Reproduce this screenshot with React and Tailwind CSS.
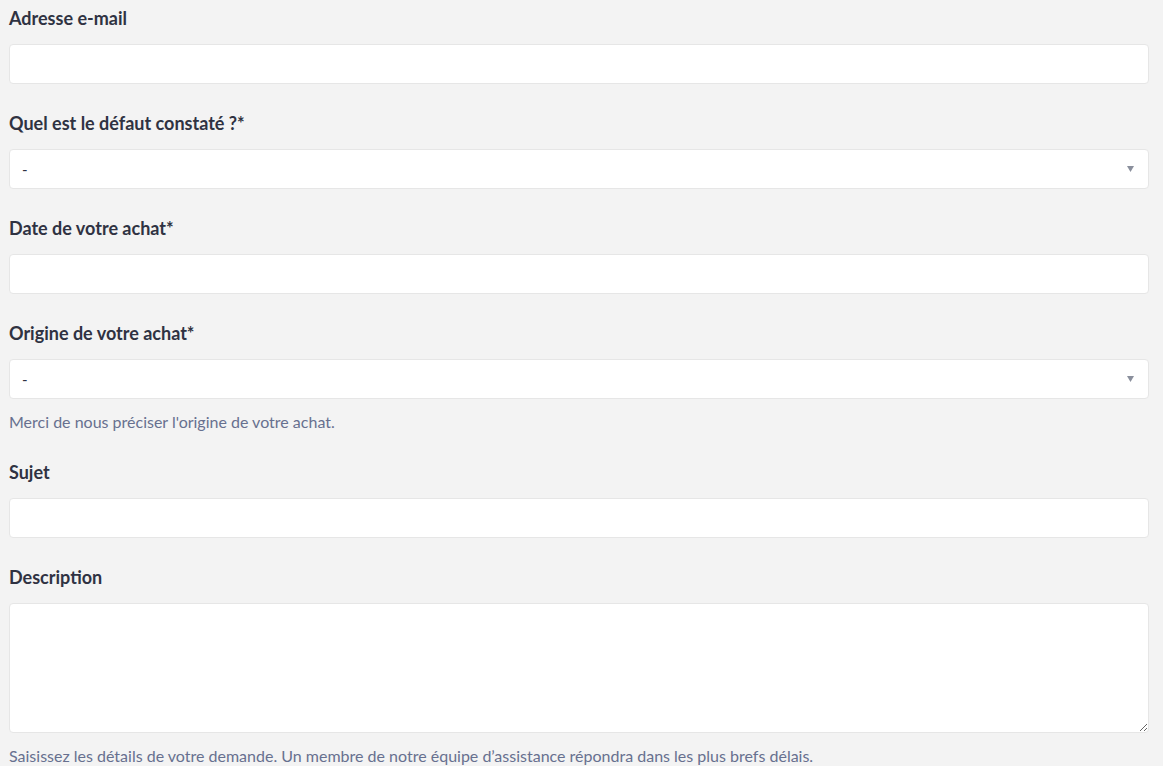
import React from "react";

const fieldBox =
  "block w-full h-10 rounded-[4px] border border-[#e6e6e6] bg-white px-3 text-[15px] text-[#2f3242] outline-none";

function Field({ label, hint, children }) {
  return (
    <div className="mb-[27px]">
      <label className="block text-[18px] leading-6 font-bold text-[#2f3242] mb-[14px]">{label}</label>
      {children}
      {hint && <p className="mt-[12px] text-[16px] leading-[22px] text-[#67708f]">{hint}</p>}
    </div>
  );
}

function Select() {
  return (
    <div className="relative">
      <div className={fieldBox + " flex items-center"}>
        <span className="text-[15px]">-</span>
      </div>
      <svg className="absolute right-[15px] top-[17px]" width="7" height="6" viewBox="0 0 7 6">
        <path d="M0 0h7L3.5 6z" fill="#8a8f9c" />
      </svg>
    </div>
  );
}

export default function App() {
  return (
    <div className="min-h-screen bg-[#f3f3f3] pl-[9px] pr-[14px] pt-[6px]" style={{ fontFamily: "Lato, 'Open Sans', sans-serif" }}>
      <Field label="Adresse e-mail">
        <input className={fieldBox} />
      </Field>
      <Field label="Quel est le défaut constaté ?*">
        <Select />
      </Field>
      <Field label="Date de votre achat*">
        <input className={fieldBox} />
      </Field>
      <Field label="Origine de votre achat*" hint="Merci de nous préciser l'origine de votre achat.">
        <Select />
      </Field>
      <Field label="Sujet">
        <input className={fieldBox} />
      </Field>
      <Field
        label="Description"
        hint="Saisissez les détails de votre demande. Un membre de notre équipe d’assistance répondra dans les plus brefs délais."
      >
        <textarea className="block w-full h-[130px] rounded-[4px] border border-[#e6e6e6] bg-white px-3 py-2 outline-none" />
      </Field>
    </div>
  );
}
